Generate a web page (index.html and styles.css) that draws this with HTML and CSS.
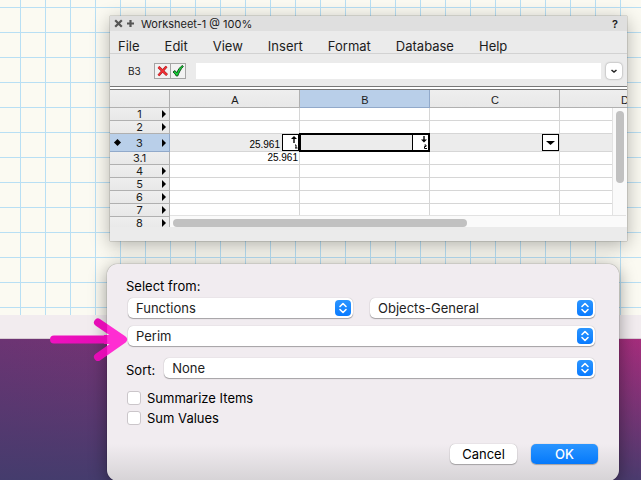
FILE: index.html
```html
<!DOCTYPE html>
<html lang="en">
<head>
    <meta charset="UTF-8">
    <meta name="viewport" content="width=device-width, initial-scale=1.0">
    <title>Worksheet-1</title>
    <link rel="stylesheet" href="styles.css">
</head>
<body>
    <div class="desktop">
        <div class="drawing"></div>
        <div class="status-strip"></div>

        <section class="worksheet">
            <header class="title-bar">
                <button class="title-btn" aria-label="Close"><svg width="9" height="9" viewBox="0 0 9 9"><path d="M1.2 1.2l6.6 6.6M7.8 1.2L1.2 7.8"/></svg></button>
                <button class="title-btn" aria-label="Zoom"><svg width="9" height="9" viewBox="0 0 9 9"><path d="M4.5 1v7M1 4.5h7"/></svg></button>
                <span class="title">Worksheet-1 @ 100%</span>
                <button class="title-btn help" aria-label="Help">?</button>
            </header>
            <nav class="menu-bar">
                <button>File</button>
                <button>Edit</button>
                <button>View</button>
                <button>Insert</button>
                <button>Format</button>
                <button>Database</button>
                <button>Help</button>
            </nav>
            <div class="formula-bar">
                <label class="cell-ref" for="formula">B3</label>
                <div class="confirm">
                    <button aria-label="Cancel entry"><svg width="14" height="14" viewBox="0 0 14 14"><path d="M2.500 3l8.500 8M10.500 2.500L2.500 11.500" fill="none" stroke="#8c2020" stroke-width="2.6"/><path d="M2.500 3l8.500 8M10.500 2.500L2.500 11.500" fill="none" stroke="#f22f35" stroke-width="1.8"/></svg></button>
                    <button aria-label="Accept entry"><svg width="14" height="14" viewBox="0 0 14 14"><path d="M2 8l2-1.4 1.8 2.2C7 5.500 9 3 11.500 1.500l.8.9C9.800 5 8 8.500 6.700 12H5.300C4.600 10.500 3.500 9 2 8z" fill="#12d636" stroke="#134f1d"/></svg></button>
                </div>
                <input class="formula" id="formula" type="text">
                <button class="more" aria-label="More"><svg width="8" height="8" viewBox="0 0 8 8"><path d="M1.500 3L4 5l2.500-2" fill="none" stroke="#222" stroke-width="1.600"/></svg></button>
            </div>

            <div class="sheet">
                <table>
                    <colgroup>
                        <col class="col-head"><col><col><col><col>
                    </colgroup>
                    <thead>
                        <tr><th></th><th>A</th><th class="active">B</th><th>C</th><th>D</th></tr>
                    </thead>
                    <tbody>
                        <tr><th class="row-arrow">1</th><td></td><td></td><td></td><td></td></tr>
                        <tr><th class="row-arrow">2</th><td></td><td></td><td></td><td></td></tr>
                        <tr class="database">
                            <th class="row-arrow active"><i class="diamond"></i>3</th>
                            <td><span class="value">25.961</span>
                                <button class="flag" aria-label="Sort ascending"><svg width="15" height="15" viewBox="0 0 15 15"><path d="M11 8V3" stroke="#000" stroke-width="1.400"/><path d="M8 4l3-3 3 3z"/><path d="M12 10h1v3M12 13h2.500" fill="none" stroke="#000"/></svg></button>
                            </td>
                            <td class="selected">
                                <button class="flag" aria-label="Sort descending"><svg width="15" height="15" viewBox="0 0 15 15"><path d="M11 1v5" stroke="#000" stroke-width="1.400"/><path d="M8 4.500l3 3 3-3z"/><path d="M11.500 10h1.500v1.500h-1.500v2h2.500" fill="none" stroke="#000"/></svg></button>
                            </td>
                            <td>
                                <button class="flag" aria-label="Column options"><svg width="15" height="15" viewBox="0 0 15 15"><path d="M3 6h9l-4.500 4z"/></svg></button>
                            </td>
                            <td></td>
                        </tr>
                        <tr><th>3.1</th><td><span class="value">25.961</span></td><td></td><td></td><td></td></tr>
                        <tr><th class="row-arrow">4</th><td></td><td></td><td></td><td></td></tr>
                        <tr><th class="row-arrow">5</th><td></td><td></td><td></td><td></td></tr>
                        <tr><th class="row-arrow">6</th><td></td><td></td><td></td><td></td></tr>
                        <tr><th class="row-arrow">7</th><td></td><td></td><td></td><td></td></tr>
                        <tr><th class="row-arrow">8</th><td></td><td></td><td></td><td></td></tr>
                    </tbody>
                </table>
                <div class="track track-y"><div class="thumb"></div></div>
                <div class="track track-x"><div class="thumb"></div></div>
            </div>
        </section>

        <form class="dialog">
            <label class="heading" for="source">Select from:</label>
            <div class="row pair">
                <div class="popup">
                    <select id="source"><option>Functions</option></select>
                    <svg class="stepper" width="16" height="16" viewBox="0 0 16 16"><path d="M5 6.500l3-3 3 3M5 9.500l3 3 3-3"/></svg>
                </div>
                <div class="popup">
                    <select aria-label="Category"><option>Objects-General</option></select>
                    <svg class="stepper" width="16" height="16" viewBox="0 0 16 16"><path d="M5 6.500l3-3 3 3M5 9.500l3 3 3-3"/></svg>
                </div>
            </div>
            <div class="row">
                <div class="popup">
                    <select aria-label="Function"><option>Perim</option></select>
                    <svg class="stepper" width="16" height="16" viewBox="0 0 16 16"><path d="M5 6.500l3-3 3 3M5 9.500l3 3 3-3"/></svg>
                </div>
            </div>
            <div class="row sort">
                <label for="sort">Sort:</label>
                <div class="popup">
                    <select id="sort"><option>None</option></select>
                    <svg class="stepper" width="16" height="16" viewBox="0 0 16 16"><path d="M5 6.500l3-3 3 3M5 9.500l3 3 3-3"/></svg>
                </div>
            </div>
            <div class="checks">
                <label><input type="checkbox">Summarize Items</label>
                <label><input type="checkbox">Sum Values</label>
            </div>
            <div class="actions">
                <button type="button" class="btn">Cancel</button>
                <button type="button" class="btn primary">OK</button>
            </div>
        </form>

        <!-- Pointer to the function list -->
        <svg class="pointer" width="80" height="44" viewBox="0 0 80 44">
            <defs>
                <linearGradient id="pink" gradientUnits="userSpaceOnUse" x1="0" y1="0" x2="80" y2="0">
                    <stop offset="0" stop-color="#ef12c0"/>
                    <stop offset="0.71" stop-color="#e40bb4"/>
                    <stop offset="0.72" stop-color="#ff2dd2"/>
                </linearGradient>
            </defs>
            <g fill="none" stroke="url(#pink)" stroke-width="8" stroke-linecap="round" stroke-linejoin="round">
                <path d="M4 22.500L58 22.510"/>
                <path d="M48 5.500L73 22.500 48 40"/>
            </g>
            <path d="M54 18h12l8 5-8 4H54z" fill="url(#pink)"/>
        </svg>
    </div>
</body>
</html>
```
FILE: styles.css
```css
* {
    box-sizing: border-box;
}

body {
    margin: 0;
    font-family: Inter, "Liberation Sans", sans-serif;
    font-size: 13px;
    color: #1c1c1c;
}

button, input, select {
    font: inherit;
    color: inherit;
    margin: 0;
    padding: 0;
    border: 0;
    background: none;
}

svg {
    display: block;
}

.desktop {
    position: relative;
    height: 100vh;
    overflow: hidden;
    display: flex;
    flex-direction: column;
    background:
        linear-gradient(to bottom, rgba(67, 61, 110, 0) 339px, rgba(63, 61, 108, 0.95) 490px),
        linear-gradient(to right, #6c3473, #8a3074 75%, #a52d7c);
}

/* Drawing canvas with a 25px grid */
.drawing {
    height: 315px;
    background-color: #fbfaf2;
    background-image:
        linear-gradient(to right, #b8dff4 1px, transparent 1px),
        linear-gradient(to bottom, #b8dff4 1px, transparent 1px);
    background-size: 25px 25px;
    background-position: 20px 7px;
}

.status-strip {
    height: 24px;
    background: #f2ecef;
    border-bottom: 1px solid #d8cbd3;
}

/* Worksheet window */
.worksheet {
    position: absolute;
    left: 110px;
    right: 14px;
    top: 16px;
    padding-bottom: 14px;
    background: #ebebeb;
    box-shadow: 0 0 1px rgba(0, 0, 0, 0.6), 0 4px 18px rgba(0, 0, 0, 0.3);
}

.title-bar {
    display: flex;
    align-items: center;
    gap: 3px;
    height: 15px;
    padding: 0 9px 0 4px;
    background: #dfdfdf;
    font-size: 11px;
}

.title-btn path {
    stroke: #555;
    stroke-width: 2.200;
}

.title {
    margin-left: 3px;
}

.help {
    margin-left: auto;
    font-weight: 600;
}

.menu-bar {
    display: flex;
    gap: 25px;
    height: 23px;
    padding: 6px 8px 0;
    border-bottom: 1px solid #d2d2d2;
}

.menu-bar button {
    height: 16px;
    line-height: 18px;
}

.formula-bar {
    display: flex;
    align-items: center;
    height: 32px;
    padding: 2px 5px 0 18px;
}

.cell-ref {
    width: 26px;
    font-size: 10px;
}

.confirm {
    display: flex;
}

.confirm button {
    width: 17px;
    height: 16px;
    padding-left: 1px;
    border: 1px solid #a5a5a5;
    background: #f2f2f2;
}

.confirm button + button {
    margin-left: -1px;
    width: 16px;
    padding: 0;
}

.formula {
    flex: 1;
    min-width: 0;
    height: 16px;
    margin: 0 5px 0 10px;
    background: #fff;
}

.more {
    display: flex;
    align-items: center;
    justify-content: center;
    width: 16px;
    height: 16px;
    border-radius: 4px;
    background: #fff;
    box-shadow: 0 0 2px rgba(0, 0, 0, 0.45);
}

/* Cell grid */
.sheet {
    position: relative;
    height: 141px;
    overflow: hidden;
    border-top: 4px double #777;
    background: #fff;
}

table {
    width: 580px;
    table-layout: fixed;
    border-collapse: separate;
    border-spacing: 0;
}

.col-head {
    width: 60px;
}

th, td {
    position: relative;
    height: 13px;
    padding: 0;
    border-right: 1px solid #d6d6d6;
    border-bottom: 1px solid #d6d6d6;
    line-height: 12px;
}

th {
    border-color: #b0b0b0;
    background: linear-gradient(#eee, #e8e8e8);
    font-size: 11px;
    font-weight: 400;
}

thead th {
    height: 18px;
    padding: 4px 0 0 1px;
    font-family: "Liberation Sans", Arial, sans-serif;
    line-height: 13px;
}

th.active {
    border-color: #91a9ca;
    background: #b9cfe9;
}

.database th, .database td {
    height: 18px;
}

.database td {
    background: #ececec;
}

.row-arrow::after {
    content: "";
    position: absolute;
    right: 3px;
    top: 50%;
    margin-top: -4px;
    border: 4px solid transparent;
    border-left: 4px solid #000;
    border-right: 0;
}

.diamond {
    position: absolute;
    left: 5px;
    top: 6px;
    width: 5px;
    height: 5px;
    background: #000;
    transform: rotate(45deg);
}

.value {
    display: block;
    padding-right: 1px;
    font: 10px/12px "Liberation Sans", Arial, sans-serif;
    line-height: 12px;
    color: #000;
    text-align: right;
}

.database td {
    vertical-align: bottom;
}

.database .value {
    padding-right: 19px;
}

.flag {
    position: absolute;
    right: 0;
    top: 0;
    width: 17px;
    height: 17px;
    border: 1px solid #000;
    background: #fff;
}

.selected::after {
    content: "";
    position: absolute;
    inset: -1px;
    border: 2px solid #000;
}

.track {
    position: absolute;
    background: #fafafa;
}

.track-y {
    right: 0;
    top: 18px;
    bottom: 0;
    width: 15px;
    padding: 3px 3px 0;
    border-left: 1px solid #e2e2e2;
}

.track-x {
    left: 60px;
    right: 1px;
    bottom: 0;
    height: 12px;
    padding: 3px 0 0 3px;
    border-top: 1px solid #e2e2e2;
}

.thumb {
    border-radius: 4px;
    background: #c1c1c1;
}

.track-y .thumb {
    height: 72px;
}

.track-x .thumb {
    width: 65%;
    height: 8px;
}

/* Criteria dialog */
.dialog {
    position: absolute;
    left: 107px;
    right: 22px;
    top: 264px;
    padding: 14px 21px 17px 19px;
    border-radius: 11px;
    background: linear-gradient(#f1ecf0 180px, #d6d3d6);
    box-shadow: 0 0 1px rgba(0, 0, 0, 0.7), 0 4px 18px rgba(0, 0, 0, 0.4);
    color: #000;
}

.heading {
    display: block;
    height: 20px;
    line-height: 16px;
}

.row {
    display: flex;
    align-items: center;
    margin: 0 3px 8px 2px;
}

.pair {
    gap: 17px;
}

.popup {
    position: relative;
    flex: 1;
}

.popup select {
    appearance: none;
    display: block;
    width: 100%;
    height: 20px;
    padding: 0 24px 0 8px;
    border-radius: 5px;
    background: #fff;
    box-shadow: 0 1px 1px rgba(0, 0, 0, 0.3), 0 0 1px rgba(0, 0, 0, 0.3);
    color: #222;
    line-height: 20px;
}

.stepper {
    position: absolute;
    right: 2px;
    top: 2px;
    border-radius: 4px;
    background: linear-gradient(#2b95ff, #0a7bff);
    pointer-events: none;
}

.stepper path {
    fill: none;
    stroke: #fff;
    stroke-width: 1.600;
    stroke-linecap: round;
    stroke-linejoin: round;
}

.sort {
    gap: 9px;
    margin: 12px 3px 12px 0;
}

.sort label {
    padding-top: 3px;
}

.checks {
    display: flex;
    flex-direction: column;
    align-items: flex-start;
    gap: 4px;
    padding-left: 1px;
}

.checks label {
    display: flex;
    align-items: center;
    gap: 6px;
    height: 16px;
}

.checks input {
    appearance: none;
    width: 14px;
    height: 14px;
    border: 1px solid #cbc6ca;
    border-radius: 3px;
    background: #fff;
}

.actions {
    display: flex;
    justify-content: flex-end;
    gap: 14px;
    margin-top: 18px;
}

.btn {
    width: 67px;
    height: 20px;
    border-radius: 5px;
    background: #fff;
    box-shadow: 0 1px 1px rgba(0, 0, 0, 0.25), 0 0 1px rgba(0, 0, 0, 0.35);
    line-height: 20px;
}

.primary {
    background: linear-gradient(#2a95ff, #0579fb);
    color: #fff;
    font-weight: 500;
}

.pointer {
    position: absolute;
    left: 50px;
    top: 317px;
}
```
